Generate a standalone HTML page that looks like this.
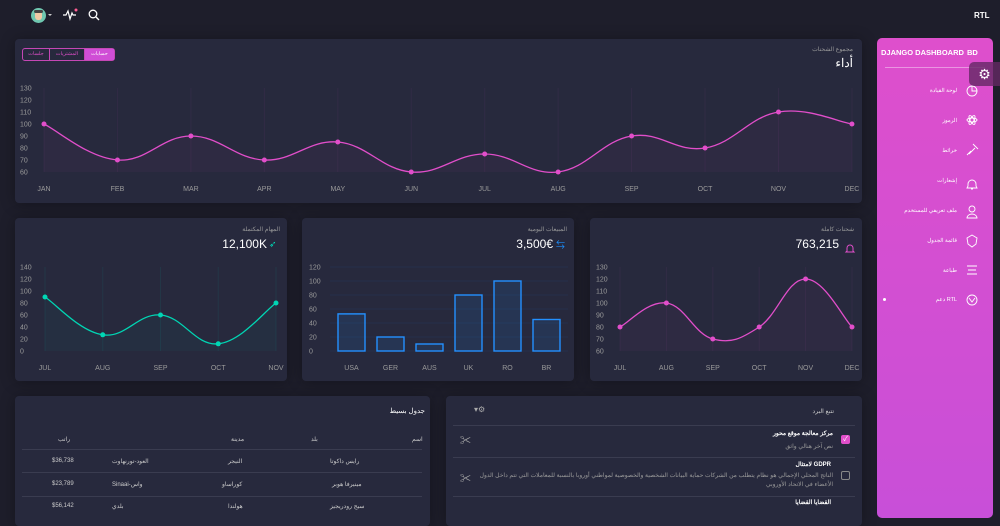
<!DOCTYPE html>
<html><head><meta charset="utf-8">
<style>
*{box-sizing:border-box;margin:0;padding:0}
body{width:1000px;height:510px;overflow:hidden;background:#1e1e2b;font-family:"Liberation Sans","Noto Sans CJK SC",sans-serif;color:#fff;position:relative}
.card{position:absolute;background:#27293d;border-radius:4px;box-shadow:0 1px 15px rgba(0,0,0,.3)}
.t{position:absolute;font-size:6px;color:#9a9a9a;text-align:right}
.ax{font-family:"Liberation Sans",sans-serif;font-size:7px;fill:#9a9a9a}
svg{position:absolute;left:0;top:0}
.side{position:absolute;left:877px;top:38px;width:116px;height:480px;border-radius:5px;background:linear-gradient(180deg,#de4fcc 0%,#c84fd8 100%)}
.si{position:absolute;right:14px;font-size:5.5px;color:#fff}
.row{position:absolute;font-size:6px;color:#ccc}
</style></head><body>
<div style="position:absolute;left:31px;top:8px;width:15px;height:15px;border-radius:50%;background:#6fc7b0;overflow:hidden"><div style="position:absolute;left:4px;top:3px;width:7px;height:9px;background:#f1c9a5;border-radius:3px"></div><div style="position:absolute;left:3px;top:2px;width:9px;height:3px;background:#444;border-radius:2px"></div></div>
<div style="position:absolute;left:48px;top:14px;border:2px solid transparent;border-top:2px solid #ccc"></div>
<svg width="1000" height="510" style="pointer-events:none">
<path d="M63 15h3l2-4 2 8 2-6 1 2h3" stroke="#fff" stroke-width="1.2" fill="none"/>
<circle cx="76" cy="10" r="1.5" fill="#fd5d93"/>
<circle cx="93" cy="14" r="3.8" stroke="#fff" stroke-width="1.3" fill="none"/><path d="M96 17l3 3" stroke="#fff" stroke-width="1.4"/>
</svg>
<div style="position:absolute;left:974px;top:11px;font-size:8px;font-weight:bold">RTL</div>

<div class="card" style="left:15px;top:39px;width:847px;height:164px"></div>
<div style="position:absolute;left:22px;top:48px;width:93px;height:13px;border:1px solid #c447b5;border-radius:3px;display:flex;font-size:5px;color:#e14eca">
<div style="width:27px;border-right:1px solid #c447b5;text-align:center;line-height:11px">جلسات</div>
<div style="width:35px;border-right:1px solid #c447b5;text-align:center;line-height:11px">المشتريات</div>
<div style="flex:1;background:#d04ed6;color:#fff;text-align:center;line-height:11px">حسابات</div></div>
<div class="t" style="right:147px;top:46px">مجموع الشحنات</div>
<div style="position:absolute;right:147px;top:56px;font-size:12px;color:#fff">أداء</div>

<div class="card" style="left:15px;top:218px;width:272px;height:163px"></div>
<div class="card" style="left:302px;top:218px;width:272px;height:163px"></div>
<div class="card" style="left:590px;top:218px;width:272px;height:163px"></div>
<div class="t" style="right:720px;top:226px">المهام المكتملة</div>
<div style="position:absolute;right:733px;top:237px;font-size:12px">12,100K</div>
<div style="position:absolute;left:269px;top:239px;color:#00d6b4;font-size:9px">➶</div>
<div class="t" style="right:433px;top:226px">المبيعات اليومية</div>
<div style="position:absolute;right:447px;top:237px;font-size:12px">3,500€</div>
<div style="position:absolute;left:556px;top:238px;color:#1d8cf8;font-size:9px">⇆</div>
<div class="t" style="right:146px;top:226px">شحنات كاملة</div>
<div style="position:absolute;right:161px;top:237px;font-size:12px">763,215</div>
<svg width="1000" height="510"><path d="M847 248a3 3 0 0 1 6 0v3l1 1h-8l1-1z" stroke="#e14eca" fill="none" stroke-width="1"/></svg>

<div class="card" style="left:15px;top:396px;width:415px;height:130px"></div>
<div class="card" style="left:446px;top:396px;width:416px;height:130px"></div>
<div style="position:absolute;right:575px;top:407px;font-size:7px">جدول بسيط</div>
<div class="row" style="left:58px;top:436px">راتب</div>
<div class="row" style="left:231px;top:436px">مدينة</div>
<div class="row" style="left:311px;top:436px">بلد</div>
<div class="row" style="left:412px;top:436px">اسم</div>
<div style="position:absolute;left:22px;top:449px;width:400px;border-top:1px solid #3a3c50"></div>
<div style="position:absolute;left:22px;top:472px;width:400px;border-top:1px solid #3a3c50"></div>
<div style="position:absolute;left:22px;top:496px;width:400px;border-top:1px solid #3a3c50"></div>
<div class="row" style="left:52px;top:458px">$36,738</div><div class="row" style="left:112px;top:458px">العود-تورنهاوت</div><div class="row" style="left:228px;top:458px">النيجر</div><div class="row" style="left:330px;top:458px">رايس داكوتا</div>
<div class="row" style="left:52px;top:481px">$23,789</div><div class="row" style="left:112px;top:481px">Sinaai-واس</div><div class="row" style="left:222px;top:481px">كوراساو</div><div class="row" style="left:332px;top:481px">مينيرفا هوبر</div>
<div class="row" style="left:52px;top:503px">$56,142</div><div class="row" style="left:112px;top:503px">بلدي</div><div class="row" style="left:228px;top:503px">هولندا</div><div class="row" style="left:330px;top:503px">سيج رودريجيز</div>

<div class="t" style="right:166px;top:408px;color:#ccc">تتبع البرد</div>
<div style="position:absolute;left:474px;top:405px;font-size:8px;color:#aaa">▾⚙</div>
<div style="position:absolute;left:453px;top:425px;width:402px;border-top:1px solid #3a3c50"></div>
<div style="position:absolute;left:453px;top:457px;width:402px;border-top:1px solid #3a3c50"></div>
<div style="position:absolute;left:453px;top:496px;width:402px;border-top:1px solid #3a3c50"></div>
<div style="position:absolute;right:167px;top:430px;font-size:6px;font-weight:bold">مركز معالجة موقع محور</div>
<div class="t" style="right:167px;top:443px">نص آخر هنالي واثق</div>
<div style="position:absolute;left:841px;top:435px;width:9px;height:9px;background:#e14eca;border-radius:2px;font-size:7px;line-height:9px;text-align:center">✓</div>
<div style="position:absolute;right:169px;top:461px;font-size:6px;font-weight:bold">لامتثال GDPR</div>
<div class="t" style="right:167px;top:472px;width:360px;line-height:9px">الناتج المحلي الإجمالي هو نظام يتطلب من الشركات حماية البيانات الشخصية والخصوصية لمواطني أوروبا بالنسبة للمعاملات التي تتم داخل الدول الأعضاء في الاتحاد الأوروبي</div>
<div style="position:absolute;left:841px;top:471px;width:9px;height:9px;border:1px solid #888;border-radius:2px"></div>
<div style="position:absolute;right:169px;top:499px;font-size:6px;font-weight:bold">القضايا القضايا</div>
<div style="position:absolute;left:460px;top:432px;color:#aaa;font-size:11px">✂</div>
<div style="position:absolute;left:460px;top:470px;color:#aaa;font-size:11px">✂</div>

<svg id="ch" width="1000" height="510"></svg>

<div class="side">
<div style="position:absolute;left:4px;top:10px;font-size:7.5px;font-weight:bold">DJANGO DASHBOARD</div>
<div style="position:absolute;left:90px;top:10px;font-size:7.5px;font-weight:bold">BD</div>
<div style="position:absolute;left:8px;top:29px;width:100px;border-top:1px solid rgba(255,255,255,.4)"></div>
<div class="si" style="top:50px;right:36px">لوحة القيادة</div>
<div class="si" style="top:80px;right:36px">الرموز</div>
<div class="si" style="top:110px;right:36px">خرائط</div>
<div class="si" style="top:140px;right:36px">إشعارات</div>
<div class="si" style="top:170px;right:36px">ملف تعريفي للمستخدم</div>
<div class="si" style="top:200px;right:36px">قائمة الجدول</div>
<div class="si" style="top:230px;right:36px">طباعة</div>
<div class="si" style="top:259px;right:36px">دعم RTL</div>
<div style="position:absolute;left:6px;top:260px;width:3px;height:3px;border-radius:50%;background:#fff"></div>
<svg width="116" height="300" style="left:0;top:0">
<g stroke="#fff" fill="none" stroke-width="0.9">
<circle cx="95" cy="53" r="5"/><path d="M95 48v5h5"/>
<ellipse cx="95" cy="82" rx="5" ry="2"/><ellipse cx="95" cy="82" rx="5" ry="2" transform="rotate(60 95 82)"/><ellipse cx="95" cy="82" rx="5" ry="2" transform="rotate(-60 95 82)"/>
<path d="M92 116l6-6M96 106l5 5M94 113l-4 4"/>
<path d="M91 146a4 4 0 0 1 8 0v2l1 2h-10l1-2zM94 151h2"/>
<circle cx="95" cy="171" r="3"/><path d="M90 180a5 4 0 0 1 10 0z"/>
<path d="M90 200l5-3 5 3-1 6-4 3-4-3z"/>
<path d="M90 228h10M91 232h8M90 236h10"/>
<circle cx="95" cy="262" r="5"/><path d="M92 260l3 4 3-4"/>
</g></svg>
</div>
<div style="position:absolute;left:969px;top:62px;width:31px;height:24px;background:rgba(100,40,100,.8);border-radius:5px 0 0 5px;font-size:14px;line-height:24px;text-align:center;color:#fff">⚙</div>

<script>
var s=document.getElementById('ch'),h='';
function path(pts){var d='M'+pts[0][0]+' '+pts[0][1];for(var i=0;i<pts.length-1;i++){var p0=pts[i-1]||pts[i],p1=pts[i],p2=pts[i+1],p3=pts[i+2]||p2;var t=.2;d+=' C'+(p1[0]+(p2[0]-p0[0])*t)+' '+(p1[1]+(p2[1]-p0[1])*t)+' '+(p2[0]-(p3[0]-p1[0])*t)+' '+(p2[1]-(p3[1]-p1[1])*t)+' '+p2[0]+' '+p2[1];}return d;}
function line(x0,dx,labels,data,ytop,ybot,vmax,vmin,step,col,lx,ly,gcol){
 var pts=data.map(function(v,i){return [x0+dx*i,ybot-(v-vmin)/(vmax-vmin)*(ybot-ytop)]});
 for(var v=vmax;v>=vmin;v-=step){var y=ybot-(v-vmin)/(vmax-vmin)*(ybot-ytop);h+='<text class="ax" x="'+lx+'" y="'+(y+2.5)+'">'+v+'</text>';}
 labels.forEach(function(l,i){var x=x0+dx*i;h+='<line x1="'+x+'" y1="'+ytop+'" x2="'+x+'" y2="'+ybot+'" stroke="'+gcol+'" stroke-width="1"/><text class="ax" text-anchor="middle" x="'+x+'" y="'+ly+'">'+l+'</text>';});
 var d=path(pts);
 h+='<path d="'+d+' L'+pts[pts.length-1][0]+' '+ybot+' L'+pts[0][0]+' '+ybot+'Z" fill="'+col+'" fill-opacity=".04"/>';
 h+='<path d="'+d+'" stroke="'+col+'" stroke-width="1.3" fill="none"/>';
 pts.forEach(function(p){h+='<circle cx="'+p[0]+'" cy="'+p[1]+'" r="2.5" fill="'+col+'"/>';});
}
line(44,73.45,['JAN','FEB','MAR','APR','MAY','JUN','JUL','AUG','SEP','OCT','NOV','DEC'],[100,70,90,70,85,60,75,60,90,80,110,100],88,172,130,60,10,'#e14eca',20,191,'rgba(225,78,202,.06)');
line(45,57.75,['JUL','AUG','SEP','OCT','NOV'],[90,27,60,12,80],267,351,140,0,20,'#00d6b4',20,370,'rgba(0,214,180,.08)');
line(620,46.4,['JUL','AUG','SEP','OCT','NOV','DEC'],[80,100,70,80,120,80],267,351,130,60,10,'#e14eca',596,370,'rgba(225,78,202,.06)');
for(var v=120;v>=0;v-=20){var y=351-v*0.7;h+='<text class="ax" x="309" y="'+(y+2.5)+'">'+v+'</text><line x1="330" x2="568" y1="'+y+'" y2="'+y+'" stroke="rgba(29,140,248,.08)"/>';}
[['USA',53],['GER',20],['AUS',10],['UK',80],['RO',100],['BR',45]].forEach(function(b,i){var x=338+i*39,top=351-b[1]*0.7;h+='<rect x="'+x+'" y="'+top+'" width="27" height="'+(351-top)+'" fill="rgba(29,140,248,.12)" stroke="#2390ff" stroke-width="1.4"/><text class="ax" text-anchor="middle" x="'+(x+13.5)+'" y="370">'+b[0]+'</text>';});
s.innerHTML=h;
</script>
</body></html>
